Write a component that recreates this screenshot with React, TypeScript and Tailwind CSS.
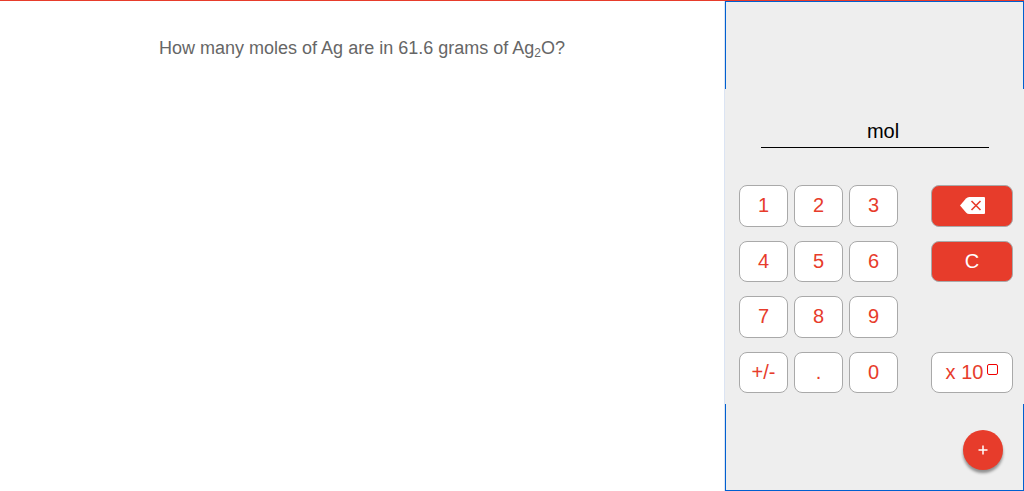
import type { ReactNode } from 'react';
import { clsx } from 'clsx';

interface KeyProps {
  children: ReactNode;
  label?: string;
  filled?: boolean;
}

function Key({ children, label, filled = false }: KeyProps) {
  return (
    <button
      type="button"
      aria-label={label}
      className={clsx(
        'flex items-center justify-center rounded-lg border border-[#a9a9a9] pb-px text-xl leading-6',
        filled ? 'bg-[#e73c2b] text-white' : 'bg-white text-[#e73c2b]'
      )}
    >
      {children}
    </button>
  );
}

const digitKeys = ['1', '2', '3', '4', '5', '6', '7', '8', '9', '+/-', '.', '0'];

function Keypad() {
  return (
    <div className="flex h-52 justify-between">
      <div className="grid w-[159px] grid-cols-3 grid-rows-4 gap-x-1.5 gap-y-3.5">
        {digitKeys.map((key) => (
          <Key key={key}>{key}</Key>
        ))}
      </div>

      <div className="grid w-[82px] grid-rows-4 gap-y-3.5">
        <Key label="Backspace" filled>
          <svg className="h-[17px] w-[25px]" viewBox="0 0 25 17">
            <path
              fill="currentColor"
              d="M0 8.5 6 1.5Q7.4 0 9.2 0H24q1 0 1 1v15q0 1-1 1H9.2q-1.8 0-3.2-1.5z"
            />
            <path
              fill="none"
              stroke="#e73c2b"
              strokeWidth={1.6}
              d="m11.5 4 9 9m0-9-9 9"
            />
          </svg>
        </Key>
        <Key filled>C</Key>
        <div />
        <Key>
          x 10
          <svg className="mb-1 ml-1 size-[11px]" viewBox="0 0 11 11">
            <rect
              x="0.5"
              y="0.5"
              width="10"
              height="10"
              rx="1.5"
              fill="none"
              stroke="#f00000"
            />
          </svg>
        </Key>
      </div>
    </div>
  );
}

export default function App() {
  return (
    <div className="flex min-h-screen border-t border-[#e73c2b] bg-white font-['Liberation_Sans',Arial,sans-serif]">
      <main className="flex-1 px-6 pt-[35px] text-center">
        <h1 className="text-lg leading-6 text-[#666666]">
          How many moles of Ag are in 61.6 grams of Ag
          <sub className="text-xs">2</sub>O?
        </h1>
      </main>

      <aside className="flex w-[300px] shrink-0 flex-col border-l border-[#dbe4f3] bg-[#eeeeee]">
        <div className="h-22 border-x border-t border-[#0060d0]" />

        {/* Answer and keypad */}
        <div className="pt-7 pr-[11px] pb-[11px] pl-3.5">
          <div className="mr-6 ml-[22px] flex h-[31px] items-center justify-center border-b border-black pb-0.5 text-xl leading-6 text-black">
            <input
              id="answer"
              type="text"
              inputMode="decimal"
              className="w-4 text-right outline-none"
            />
            <label htmlFor="answer">mol</label>
          </div>
          <div className="pt-[37px]">
            <Keypad />
          </div>
        </div>

        {/* Add button */}
        <div className="flex flex-1 items-center justify-end border-x border-b border-[#0060d0] pt-1.5 pr-5">
          <button
            type="button"
            aria-label="Add"
            className="flex size-10 items-center justify-center rounded-full bg-[#e73c2b] text-white shadow-[0_3px_3px_rgba(0,0,0,0.4)]"
          >
            <svg className="size-2.5" viewBox="0 0 10 10">
              <path
                fill="none"
                stroke="currentColor"
                strokeWidth={1.5}
                d="M5 .5v9M.5 5h9"
              />
            </svg>
          </button>
        </div>
      </aside>
    </div>
  );
}
